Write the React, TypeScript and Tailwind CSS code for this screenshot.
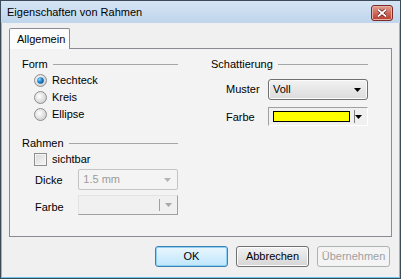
import React from 'react';

function Arrow({ color = '#000' }: { color?: string }) {
  return (
    <svg width="7" height="4" viewBox="0 0 7 4" className="shrink-0">
      <path d="M0 0h7L3.5 4z" fill={color} />
    </svg>
  );
}

function Radio({ checked }: { checked?: boolean }) {
  return (
    <svg width="13" height="13" viewBox="0 0 13 13" className="shrink-0">
      <defs>
        <radialGradient id="rg" cx="0.4" cy="0.4" r="0.7">
          <stop offset="0" stopColor="#ffffff" />
          <stop offset="1" stopColor="#c9c9c9" />
        </radialGradient>
        <radialGradient id="dot" cx="0.35" cy="0.35" r="0.75">
          <stop offset="0" stopColor="#8fd3ff" />
          <stop offset="0.5" stopColor="#1f86d0" />
          <stop offset="1" stopColor="#0b4f8f" />
        </radialGradient>
      </defs>
      <circle cx="6.5" cy="6.5" r="6" fill="url(#rg)" stroke="#8e8f8f" />
      {checked && <circle cx="6.5" cy="6.5" r="3.3" fill="url(#dot)" />}
    </svg>
  );
}

function GroupTitle({ label }: { label: string }) {
  return (
    <div className="flex h-[13px] items-center gap-[5px]">
      <span>{label}</span>
      <div className="h-px flex-1 bg-[#a6a6a6]" />
    </div>
  );
}

function Button({ label, variant }: { label: string; variant: 'default' | 'normal' | 'disabled' }) {
  const cls =
    variant === 'default'
      ? 'border-[#3c7fb1] bg-gradient-to-b from-[#eaf6fd] to-[#bee6fd] shadow-[inset_0_0_0_1px_#8fd0f5]'
      : variant === 'normal'
      ? 'border-[#707070] bg-gradient-to-b from-[#f2f2f2] to-[#d5d5d5] shadow-[inset_0_0_0_1px_#fcfcfc]'
      : 'border-[#adb2b5] bg-[#f4f4f4] text-[#a0a0a0]';
  return (
    <div className={`flex h-[21px] w-[73px] items-center justify-center rounded-[3px] border ${cls}`}>
      {label}
    </div>
  );
}

export default function App() {
  return (
    <div className="flex h-[279px] w-[401px] flex-col border border-[#3d4a58] bg-[#f0f0f0] font-['Liberation_Sans',Arial,sans-serif] text-[11px] text-black">
      {/* Title bar */}
      <div className="flex h-[22px] shrink-0 items-center justify-between bg-gradient-to-b from-[#d6e5f4] to-[#bfd5ec] pl-[6px] pr-[7px]">
        <span className="leading-none">Eigenschaften von Rahmen</span>
        <div className="mt-[1px] flex h-[16px] w-[22px] items-center justify-center rounded-[3px] border border-[#7a2b26] bg-gradient-to-b from-[#e2a093] via-[#cf6a5c] to-[#b8382c] shadow-[inset_0_0_0_1px_#e9b1a6]">
          <svg width="10" height="8" viewBox="0 0 10 8">
            <path d="M1 0.5 L9 7.5 M9 0.5 L1 7.5" stroke="#5a1a14" strokeWidth="3.2" />
            <path d="M1 0.5 L9 7.5 M9 0.5 L1 7.5" stroke="#ffffff" strokeWidth="1.8" />
          </svg>
        </div>
      </div>

      {/* Body */}
      <div className="flex flex-1 flex-col border-x border-b border-[#6ec3ee] px-[7px]">
        {/* Tab strip */}
        <div className="mt-[5px] flex">
          <div className="relative z-10 -mb-px flex h-[21px] w-[61px] items-center rounded-t-[2px] border border-b-0 border-[#898c95] bg-[#fcfcfc] pl-[7px]">
            Allgemein
          </div>
        </div>

        {/* Panel */}
        <div className="grid h-[189px] grid-cols-[156px_157px] gap-x-[33px] border border-[#898c95] bg-[#f3f3f3] pl-[12px] pt-[9px]">
          {/* Left column */}
          <div className="flex flex-col">
            <GroupTitle label="Form" />
            <div className="mt-[1px] flex flex-col pl-[12px]">
              {[
                ['Rechteck', true],
                ['Kreis', false],
                ['Ellipse', false],
              ].map(([label, checked]) => (
                <div key={label as string} className="flex h-[17px] items-center gap-[5px]">
                  <Radio checked={checked as boolean} />
                  <span>{label as string}</span>
                </div>
              ))}
            </div>

            <div className="mt-[14px]">
              <GroupTitle label="Rahmen" />
            </div>
            <div className="mt-[1px] flex h-[17px] items-center gap-[5px] pl-[12px]">
              <div className="h-[13px] w-[13px] border border-[#8e8f8f] bg-gradient-to-br from-[#d9d9d9] to-[#f7f7f7] shadow-[inset_0_0_0_1px_#f4f4f4]" />
              <span>sichtbar</span>
            </div>

            <div className="mt-[1px] flex h-[21px] items-center pl-[13px]">
              <span className="w-[44px] pt-[2px]">Dicke</span>
              <div className="flex h-[21px] w-[101px] items-center justify-between rounded-[2px] border border-[#c2c4c6] bg-[#f4f4f4] pl-[4px] pr-[6px] text-[#9b9b9b]">
                <span>1.5 mm</span>
                <Arrow color="#b4b4b4" />
              </div>
            </div>

            <div className="mt-[5px] flex h-[20px] items-center pl-[13px]">
              <span className="w-[44px] pt-[5px]">Farbe</span>
              <div className="flex h-[20px] w-[101px] items-center justify-end border border-[#e3e3e3] border-b-[#a0a0a0] border-r-[#a0a0a0] bg-[#f0f0f0] pr-[5px]">
                <div className="mr-[5px] h-[12px] w-px bg-[#a0a0a0]" />
                <Arrow color="#a8a8a8" />
              </div>
            </div>
          </div>

          {/* Right column */}
          <div className="flex flex-col">
            <GroupTitle label="Schattierung" />
            <div className="mt-[8px] flex h-[21px] items-center pl-[15px]">
              <span className="w-[42px]">Muster</span>
              <div className="flex h-[21px] w-[100px] items-center justify-between rounded-[3px] border border-[#707070] bg-gradient-to-b from-[#f2f2f2] to-[#dcdcdc] pl-[4px] pr-[6px] shadow-[inset_0_0_0_1px_#fbfbfb]">
                <span>Voll</span>
                <Arrow />
              </div>
            </div>

            <div className="mt-[7px] flex h-[19px] items-center pl-[15px]">
              <span className="w-[42px] pt-[2px]">Farbe</span>
              <div className="flex h-[19px] w-[100px] items-center border border-[#a0a0a0] border-b-white border-r-white bg-[#f0f0f0] pl-[4px] pr-[5px]">
                <div className="h-[11px] w-[77px] border border-black bg-[#ffff00]" />
                <div className="ml-[4px] h-[13px] w-px bg-[#808080]" />
                <div className="flex flex-1 justify-end">
                  <Arrow />
                </div>
              </div>
            </div>
          </div>
        </div>

        {/* Buttons */}
        <div className="mt-[9px] flex justify-end gap-[8px] pr-[2px]">
          <Button label="OK" variant="default" />
          <Button label="Abbrechen" variant="normal" />
          <Button label="Übernehmen" variant="disabled" />
        </div>
      </div>
    </div>
  );
}
